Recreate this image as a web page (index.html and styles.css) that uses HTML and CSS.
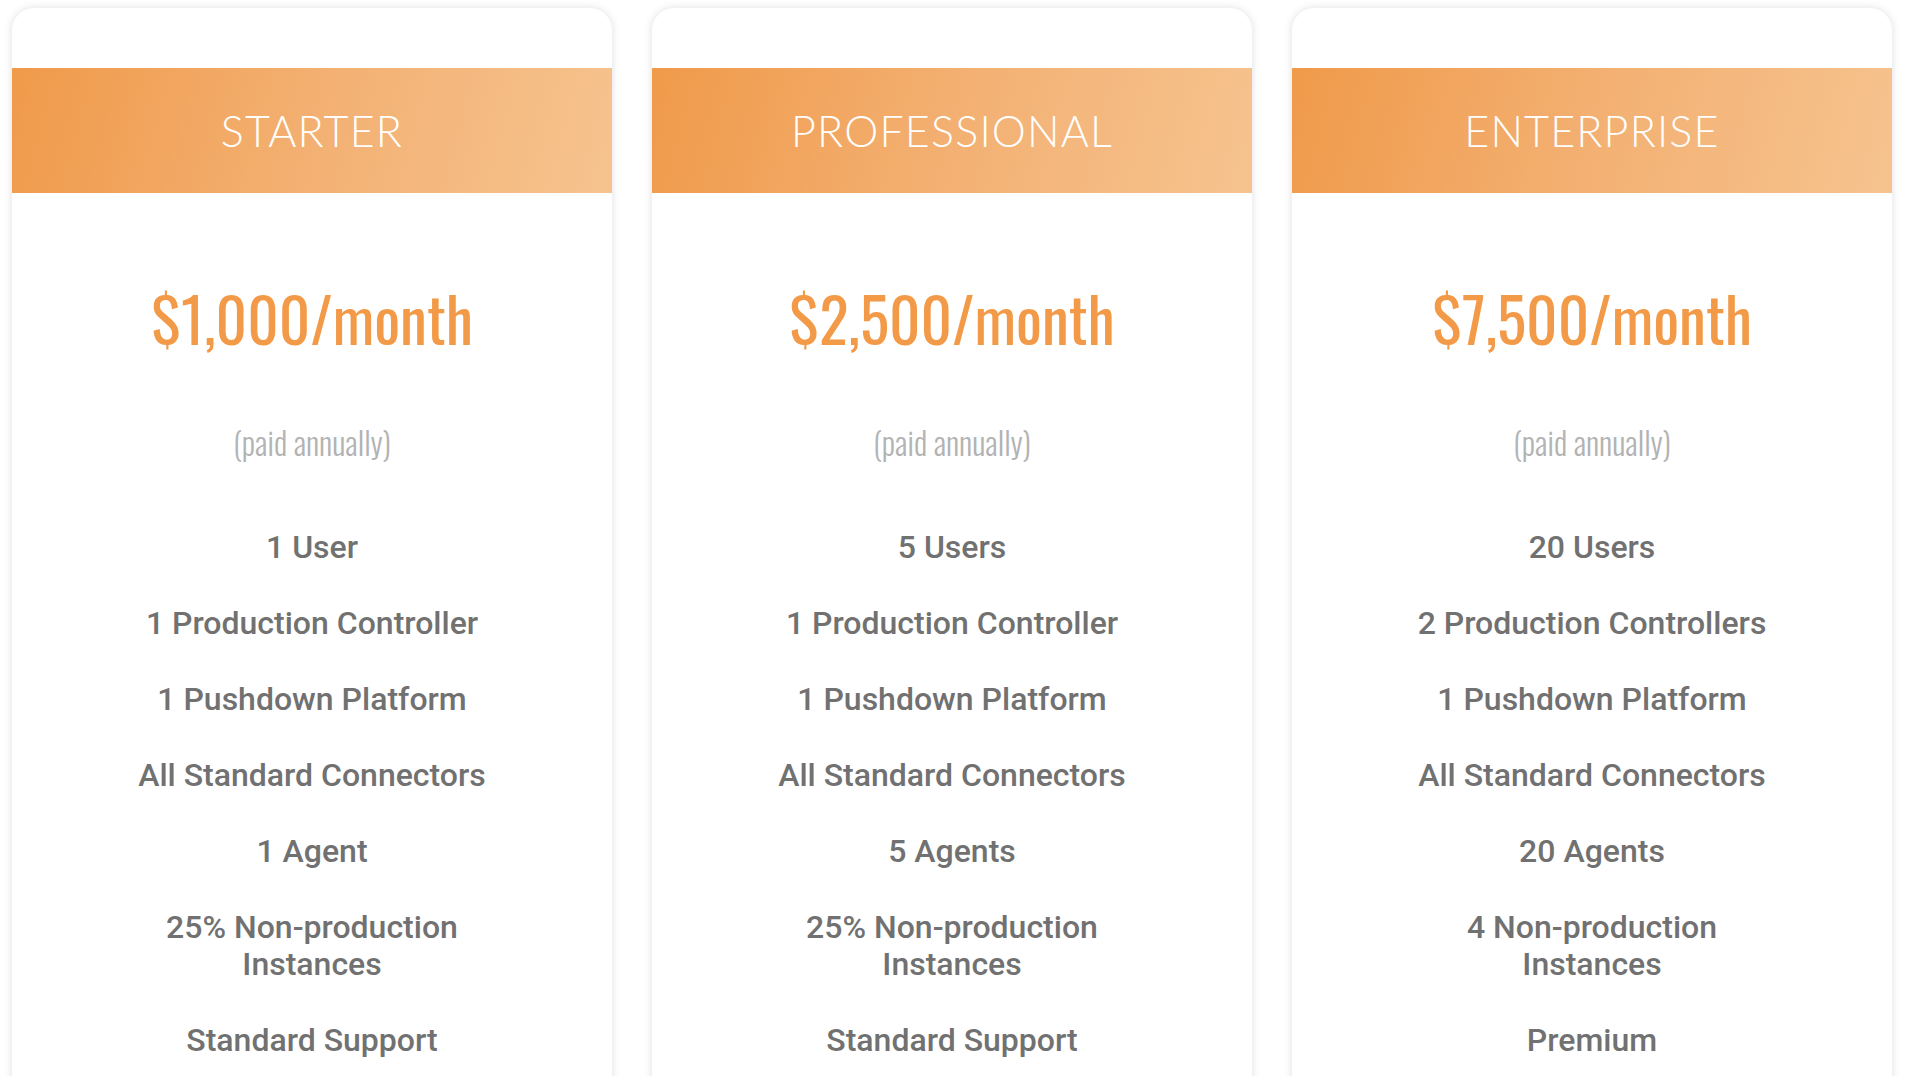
FILE: index.html
```html
<!DOCTYPE html>
<html>
<head>
<meta charset="utf-8">
<link rel="stylesheet" href="styles.css">
</head>
<body>
<div class="plans">
  <div class="card">
    <div class="band">STARTER</div>
    <div class="price">$1,000/month</div>
    <div class="paid">(paid annually)</div>
    <ul class="features">
      <li>1 User</li>
      <li>1 Production Controller</li>
      <li>1 Pushdown Platform</li>
      <li>All Standard Connectors</li>
      <li>1 Agent</li>
      <li>25% Non-production<br>Instances</li>
      <li>Standard Support</li>
    </ul>
  </div>
  <div class="card">
    <div class="band">PROFESSIONAL</div>
    <div class="price">$2,500/month</div>
    <div class="paid">(paid annually)</div>
    <ul class="features">
      <li>5 Users</li>
      <li>1 Production Controller</li>
      <li>1 Pushdown Platform</li>
      <li>All Standard Connectors</li>
      <li>5 Agents</li>
      <li>25% Non-production<br>Instances</li>
      <li>Standard Support</li>
    </ul>
  </div>
  <div class="card">
    <div class="band">ENTERPRISE</div>
    <div class="price">$7,500/month</div>
    <div class="paid">(paid annually)</div>
    <ul class="features">
      <li>20 Users</li>
      <li>2 Production Controllers</li>
      <li>1 Pushdown Platform</li>
      <li>All Standard Connectors</li>
      <li>20 Agents</li>
      <li>4 Non-production<br>Instances</li>
      <li>Premium</li>
    </ul>
  </div>
</div>
</body>
</html>
```
FILE: styles.css
```css
html, body {
  margin: 0;
  padding: 0;
  background: #ffffff;
  height: 100%;
  overflow: hidden;
}
.plans {
  display: flex;
  gap: 40px;
  padding: 8px 14px 0 12px;
}
.card {
  width: 600px;
  flex: 0 0 600px;
  height: 1200px;
  background: #ffffff;
  border-radius: 22px;
  box-shadow: 0 0 9px rgba(0, 0, 0, 0.13);
  padding-top: 60px;
  box-sizing: border-box;
  text-align: center;
}
.band {
  height: 125px;
  display: flex;
  align-items: center;
  justify-content: center;
  background: linear-gradient(105deg, #f09a4a 0%, #f3b072 50%, #f6c38f 100%);
  color: #ffffff;
  font-family: Lato, "Liberation Sans", sans-serif;
  font-weight: 300;
  font-size: 43px;
  letter-spacing: 1.2px;
}
.price {
  margin-top: 85px;
  line-height: 80px;
  height: 80px;
  color: #f29a48;
  font-family: "Oswald", "Liberation Sans Narrow", "DejaVu Sans Condensed", "Roboto", sans-serif;
  font-size: 61px;
  font-weight: 400;
}
.paid {
  margin-top: 62px;
  line-height: 44px;
  color: #b3b3b3;
  font-family: "Oswald", "Liberation Sans Narrow", "DejaVu Sans Condensed", "Roboto", sans-serif;
  font-weight: 300;
  font-size: 32px;
}
.features {
  list-style: none;
  margin: 65px 0 0 0;
  padding: 0;
  display: flex;
  flex-direction: column;
  gap: 39px;
  color: #717171;
  font-family: Roboto, "Liberation Sans", sans-serif;
  font-weight: 500;
  font-size: 32px;
  line-height: 37px;
}
```
